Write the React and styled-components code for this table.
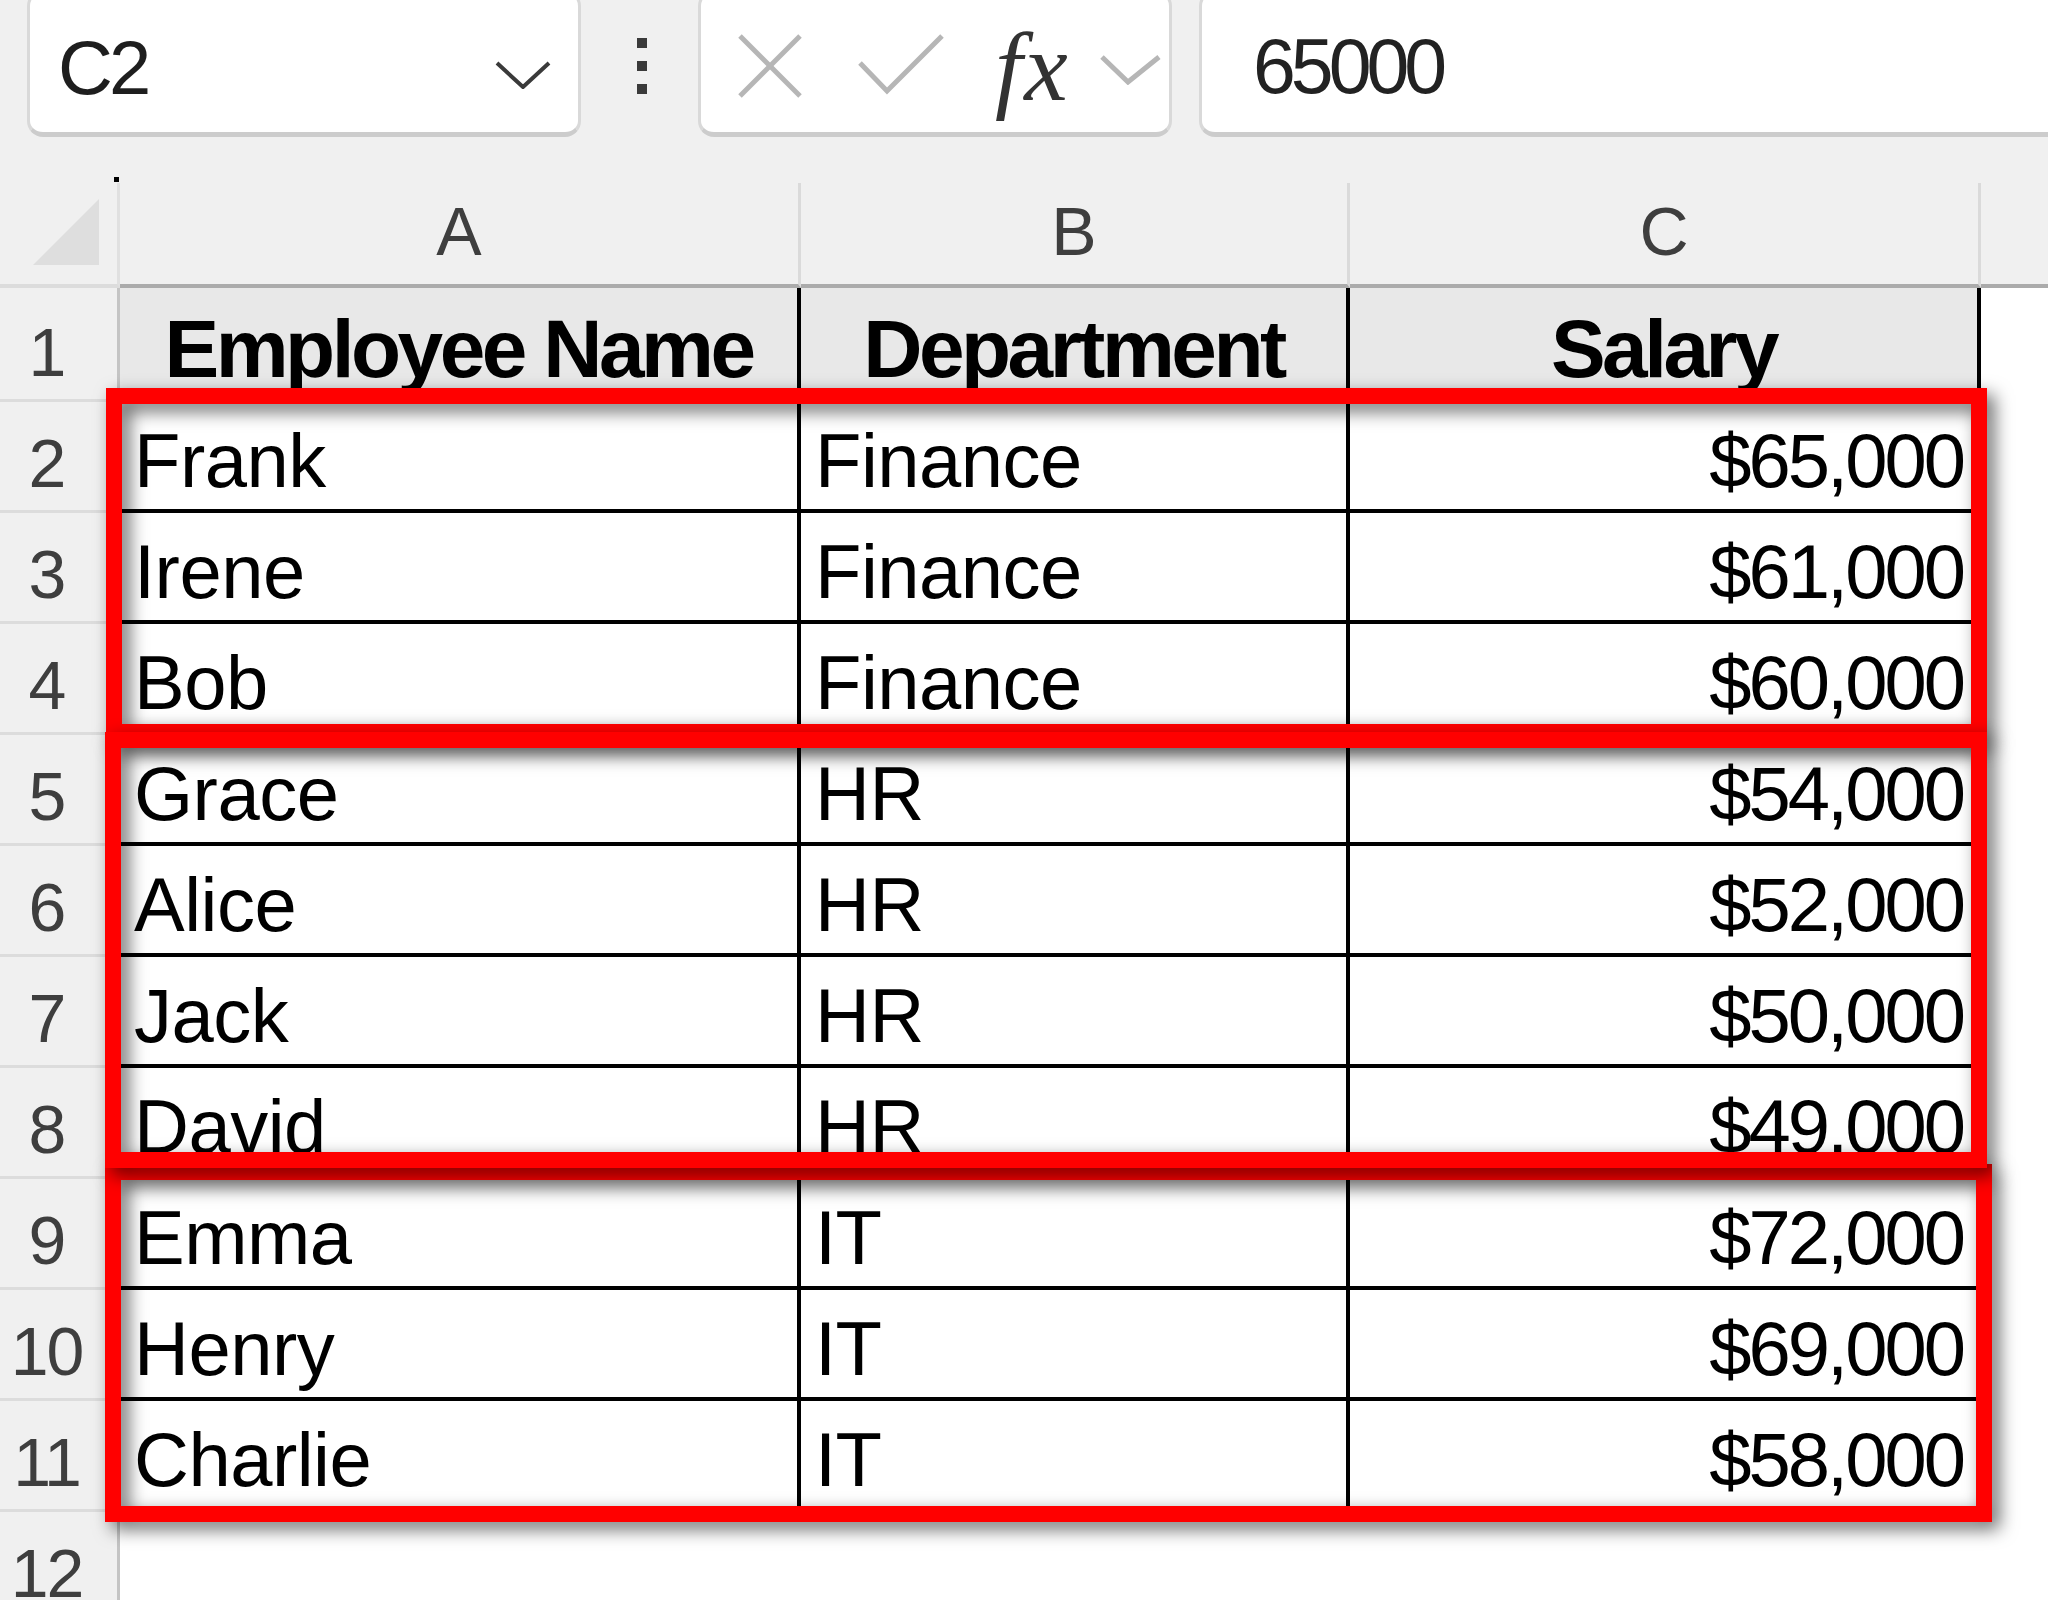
import React from 'react';
import styled, { createGlobalStyle } from 'styled-components';

const GlobalStyle = createGlobalStyle`
  html, body {
    margin: 0;
    padding: 0;
    background: #ffffff;
  }
  body {
    font-family: "Liberation Sans", Arial, sans-serif;
  }
`;

const employees = [
  { name: 'Frank', dept: 'Finance', salary: '$65,000' },
  { name: 'Irene', dept: 'Finance', salary: '$61,000' },
  { name: 'Bob', dept: 'Finance', salary: '$60,000' },
  { name: 'Grace', dept: 'HR', salary: '$54,000' },
  { name: 'Alice', dept: 'HR', salary: '$52,000' },
  { name: 'Jack', dept: 'HR', salary: '$50,000' },
  { name: 'David', dept: 'HR', salary: '$49,000' },
  { name: 'Emma', dept: 'IT', salary: '$72,000' },
  { name: 'Henry', dept: 'IT', salary: '$69,000' },
  { name: 'Charlie', dept: 'IT', salary: '$58,000' },
];

// red annotation frames, drawn in this order (HR group sits on top)
const groups = [
  { id: 'it', top: 981, left: 105, width: 1887, height: 358 },
  { id: 'finance', top: 205, left: 106, width: 1881, height: 352 },
  { id: 'hr', top: 549, left: 105, width: 1882, height: 436 },
];

function App() {
    return (
        <Page>
            <GlobalStyle />
            <FormulaBar>
                <NameBox>
                    <NameText>C2</NameText>
                    <Chevron width="56" height="28" viewBox="0 0 56 28">
                        <polyline points="2,2 28,26 54,2" />
                    </Chevron>
                </NameBox>
                <Dots>
                    <Dot />
                    <Dot />
                    <Dot />
                </Dots>
                <FxBox>
                    <ToolIcon $top={40} width="66" height="66" viewBox="0 0 66 66">
                        <line x1="3" y1="3" x2="63" y2="63" />
                        <line x1="63" y1="3" x2="3" y2="63" />
                    </ToolIcon>
                    <ToolIcon $top={40} $gap={54} width="88" height="62" viewBox="0 0 88 62">
                        <polyline points="3,30 30,58 85,3" />
                    </ToolIcon>
                    <FxLabel>fx</FxLabel>
                    <ToolIcon $top={62} $gap={30} width="62" height="30" viewBox="0 0 62 30">
                        <polyline points="2,2 28,27 59,2" />
                    </ToolIcon>
                </FxBox>
                <FormulaInput>
                    <FormulaText>65000</FormulaText>
                </FormulaInput>
            </FormulaBar>

            <SheetArea>
                <Sheet>
                    <Corner>
                        <svg width="66" height="66" viewBox="0 0 66 66">
                            <polygon points="0,66 66,0 66,66" fill="#dedede" />
                        </svg>
                    </Corner>
                    <ColHead>A</ColHead>
                    <ColHead>B</ColHead>
                    <ColHead>C</ColHead>
                    <ColHead $last />

                    <RowHead>1</RowHead>
                    <Cell $variant="head" $align="center">Employee Name</Cell>
                    <Cell $variant="head" $align="center">Department</Cell>
                    <Cell $variant="head" $align="center">Salary</Cell>
                    <Blank />

                    {employees.map((emp, i) => (
                        <React.Fragment key={emp.name}>
                            <RowHead>{i + 2}</RowHead>
                            <Cell $variant="data">{emp.name}</Cell>
                            <Cell $variant="data">{emp.dept}</Cell>
                            <Cell $variant="data" $align="right" $numeric>{emp.salary}</Cell>
                            <Blank />
                        </React.Fragment>
                    ))}

                    <RowHead>12</RowHead>
                    <Blank />
                    <Blank />
                    <Blank />
                    <Blank />
                </Sheet>

                {groups.map((g) => (
                    <GroupFrame
                        key={g.id}
                        $top={g.top}
                        $left={g.left}
                        $width={g.width}
                        $height={g.height}
                    />
                ))}
            </SheetArea>
        </Page>
    );
}

const Page = styled.div`
    width: 2048px;
    height: 1600px;
    overflow: hidden;
    background: #f0f0f0;
    display: flex;
    flex-direction: column;
`;

const FormulaBar = styled.div`
    height: 183px;
    flex-shrink: 0;
    display: flex;
    align-items: flex-start;
    padding-left: 27px;
    background: #f0f0f0;
`;

const BarBox = styled.div`
    box-sizing: border-box;
    height: 147px;
    margin-top: -10px;
    background: #ffffff;
    border: 3px solid #d9d9d9;
    border-bottom: 5px solid #cccccc;
    border-radius: 16px;
    display: flex;
    align-items: flex-start;
`;

const NameBox = styled(BarBox)`
    width: 554px;
    padding: 0 27px 0 28px;
    justify-content: space-between;
`;

const NameText = styled.span`
    margin-top: 37px;
    font-size: 76px;
    line-height: 1;
    letter-spacing: -4px;
    color: #1e1e1e;
`;

const Chevron = styled.svg`
    margin-top: 68px;
    fill: none;
    stroke: #3a3a3a;
    stroke-width: 4;
`;

const Dots = styled.div`
    margin: 38px 0 0 56px;
    display: flex;
    flex-direction: column;
    gap: 13px;
`;

const Dot = styled.div`
    width: 10px;
    height: 10px;
    background: #3a3a3a;
`;

const FxBox = styled(BarBox)`
    width: 474px;
    margin-left: 51px;
    padding-left: 36px;
`;

const ToolIcon = styled.svg`
    margin-top: ${(p) => p.$top}px;
    margin-left: ${(p) => p.$gap || 0}px;
    fill: none;
    stroke: #b6b6b6;
    stroke-width: 5;
`;

const FxLabel = styled.span`
    margin: 25px 0 0 50px;
    font-family: "Liberation Serif", "Times New Roman", serif;
    font-style: italic;
    font-size: 98px;
    line-height: 1;
    color: #333333;
    letter-spacing: 2px;
`;

const FormulaInput = styled(BarBox)`
    flex: 1;
    margin-left: 27px;
    margin-right: -30px;
    padding-left: 51px;
`;

const FormulaText = styled.span`
    margin-top: 35px;
    font-size: 77px;
    line-height: 1;
    letter-spacing: -5px;
    color: #222222;
`;

const SheetArea = styled.div`
    position: relative;
    flex: 1;
    background: #ffffff;
`;

const Sheet = styled.div`
    display: grid;
    grid-template-columns: 120px 681px 549px 631px 1fr;
    grid-template-rows: 105px 114px repeat(11, 111px);
`;

const HeaderBase = styled.div`
    box-sizing: border-box;
    background: #f0f0f0;
    display: flex;
    align-items: flex-end;
    justify-content: center;
    font-size: 68px;
    line-height: 1;
    color: #3e3e3e;
`;

const Corner = styled(HeaderBase)`
    position: relative;
    border-right: 3px solid #e0e0e0;
    border-bottom: 4px solid #dcdcdc;
    align-items: flex-start;
    justify-content: flex-end;
    padding: 16px 18px 0 0;

    &::before {
        content: '';
        position: absolute;
        top: -6px;
        right: -2px;
        width: 5px;
        height: 5px;
        background: #000000;
    }
`;

const ColHead = styled(HeaderBase)`
    border-right: ${(p) => (p.$last ? 'none' : '3px solid #dadada')};
    border-bottom: 4px solid #ababab;
    padding-bottom: 19px;
`;

const RowHead = styled(HeaderBase)`
    border-right: 3px solid #c4c4c4;
    border-bottom: 3px solid #dcdcdc;
    padding: 0 24px 13px 0;
    letter-spacing: -2px;
`;

const Cell = styled.div`
    box-sizing: border-box;
    display: flex;
    align-items: flex-end;
    justify-content: ${(p) =>
        p.$align === 'center' ? 'center' : p.$align === 'right' ? 'flex-end' : 'flex-start'};
    background: ${(p) => (p.$variant === 'head' ? '#e8e8e8' : '#ffffff')};
    border-right: 4px solid #000000;
    border-bottom: 4px solid #000000;
    padding: ${(p) => (p.$variant === 'head' ? '0 0 8px 0' : '0 14px 10px 14px')};
    font-size: ${(p) => (p.$variant === 'head' ? '82px' : '76px')};
    font-weight: ${(p) => (p.$variant === 'head' ? 700 : 400)};
    letter-spacing: ${(p) =>
        p.$variant === 'head' ? '-3.5px' : p.$numeric ? '-3px' : '-0.5px'};
    line-height: 1;
    color: #000000;
    white-space: nowrap;
    overflow: hidden;
`;

const Blank = styled.div`
    background: #ffffff;
`;

const GroupFrame = styled.div`
    position: absolute;
    top: ${(p) => p.$top}px;
    left: ${(p) => p.$left}px;
    width: ${(p) => p.$width}px;
    height: ${(p) => p.$height}px;
    box-sizing: border-box;
    border: 16px solid #ff0000;
    filter: drop-shadow(7px 7px 9px rgba(0, 0, 0, 0.6));
    pointer-events: none;
`;

export default App;
